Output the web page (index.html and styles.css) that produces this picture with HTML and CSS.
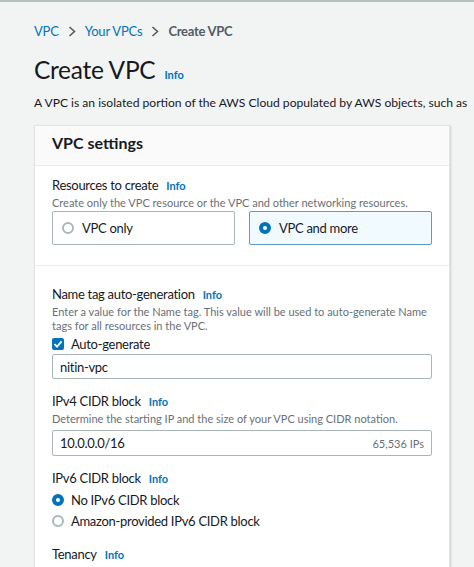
FILE: index.html
```html
<!DOCTYPE html>
<html lang="en">

<head>
    <meta charset="UTF-8">
    <meta name="viewport" content="width=device-width, initial-scale=1.0">
    <title>Create VPC</title>
    <link rel="stylesheet" href="styles.css">
</head>

<body>
    <div class="topbar"></div>

    <div class="page">
        <nav class="crumbs">
            <a href="#">VPC</a>
            <svg class="chevron" width="8" height="11" viewBox="0 0 8 11">
                <path d="M1.5 1 L6.5 5.5 L1.5 10" fill="none" stroke="#545b64" stroke-width="1.6" />
            </svg>
            <a href="#">Your VPCs</a>
            <svg class="chevron" width="8" height="11" viewBox="0 0 8 11">
                <path d="M1.5 1 L6.5 5.5 L1.5 10" fill="none" stroke="#545b64" stroke-width="1.6" />
            </svg>
            <span class="current">Create VPC</span>
        </nav>

        <h1 class="title">Create VPC <a class="info" href="#">Info</a></h1>
        <p class="lead">A VPC is an isolated portion of the AWS Cloud populated by AWS objects, such as</p>

        <div class="card">
            <div class="card-head">VPC settings</div>

            <div class="card-part">
                <div class="label">Resources to create <a class="info" href="#">Info</a></div>
                <div class="hint">Create only the VPC resource or the VPC and other networking resources.</div>
                <div class="tiles">
                    <label class="tile">
                        <span class="radio"></span>
                        VPC only
                    </label>
                    <label class="tile selected">
                        <span class="radio on"></span>
                        VPC and more
                    </label>
                </div>
            </div>

            <div class="card-part split">
                <div class="label">Name tag auto-generation <a class="info" href="#">Info</a></div>
                <div class="hint">Enter a value for the Name tag. This value will be used to auto-generate Name tags for all resources in the VPC.</div>
                <label class="check-row">
                    <span class="checkbox">
                        <svg width="10" height="10" viewBox="0 0 10 10">
                            <path d="M1.5 5.2 L4 7.6 L8.6 2.4" fill="none" stroke="#fff" stroke-width="1.8" />
                        </svg>
                    </span>
                    Auto-generate
                </label>
                <div class="input">nitin-vpc</div>

                <div class="label gap">IPv4 CIDR block <a class="info" href="#">Info</a></div>
                <div class="hint">Determine the starting IP and the size of your VPC using CIDR notation.</div>
                <div class="input cidr-input">
                    <span>10.0.0.0/16</span>
                    <span class="ips">65,536 IPs</span>
                </div>

                <div class="label gap">IPv6 CIDR block <a class="info" href="#">Info</a></div>
                <div class="options">
                    <label class="option"><span class="radio on"></span>No IPv6 CIDR block</label>
                    <label class="option"><span class="radio"></span>Amazon-provided IPv6 CIDR block</label>
                </div>

                <div class="label tenancy">Tenancy <a class="info" href="#">Info</a></div>
            </div>
        </div>
    </div>
</body>

</html>
```

FILE: styles.css
```css
body {
    margin: 0;
    background: #f2f3f3;
    font-family: Lato, "Open Sans", sans-serif;
    color: #16191f;
    overflow: hidden;
}

a {
    text-decoration: none;
}

.topbar {
    height: 2px;
    background: #b7bec0;
}

.page {
    padding: 21px 0 0 34px;
}

/* breadcrumbs */
.crumbs {
    height: 16px;
    display: flex;
    align-items: center;
    gap: 9px;
    font-size: 13px;
    letter-spacing: -0.2px;
    white-space: nowrap;
}

.crumbs a {
    color: #0073bb;
}

.crumbs .current {
    color: #545b64;
    font-weight: bold;
    letter-spacing: -0.3px;
}

.title {
    height: 32px;
    margin: 15px 0 0;
    display: flex;
    align-items: baseline;
    font-size: 24.5px;
    line-height: 32px;
    font-weight: normal;
    letter-spacing: -0.3px;
}

.info {
    color: #0073bb;
    font-size: 11px;
    font-weight: bold;
    letter-spacing: 0;
    margin-left: 8px;
}

.title .info {
    margin-left: 9px;
}

.lead {
    height: 18px;
    margin: 8px 0 0;
    font-size: 12.1px;
    line-height: 18px;
    white-space: nowrap;
}

/* container */
.card {
    margin-top: 13px;
    width: 414px;
    background: #fff;
    border: 1px solid #e1e4e4;
    box-shadow: 1px 1px 2px rgba(0, 0, 0, .15);
}

.card-head {
    height: 32px;
    padding: 7px 17px 0;
    background: #fafafa;
    border-bottom: 1px solid #eaeded;
    font-size: 16px;
    line-height: 20px;
    font-weight: bold;
}

.card-part {
    padding: 10px 17px 20px;
}

.card-part.split {
    border-top: 1px solid #eaeded;
    padding-top: 19px;
}

.label {
    height: 18px;
    display: flex;
    align-items: baseline;
    font-size: 13px;
    line-height: 18px;
    letter-spacing: -0.3px;
}

.label.gap {
    margin-top: 13px;
}

.label.tenancy {
    margin-top: 14px;
}

.hint {
    margin-top: 2px;
    font-size: 11px;
    line-height: 14px;
    color: #687078;
}

/* resource tiles */
.tiles {
    display: grid;
    grid-template-columns: 1fr 1fr;
    gap: 14px;
    margin-top: 1px;
}

.tile {
    height: 32px;
    display: flex;
    align-items: center;
    gap: 8px;
    padding: 0 9px;
    border: 1px solid #aab7b8;
    border-radius: 2px;
    font-size: 13px;
    letter-spacing: -0.3px;
}

.tile.selected {
    background: #f1faff;
    border-color: #5f9cc5;
}

.radio {
    width: 8px;
    height: 8px;
    border: 2px solid #aab7b8;
    border-radius: 50%;
    background: #fff;
    flex: none;
}

.radio.on {
    width: 4px;
    height: 4px;
    border: 4px solid #0073bb;
}

.check-row {
    height: 18px;
    display: flex;
    align-items: center;
    gap: 7px;
    margin-top: 2px;
    font-size: 13px;
    line-height: 18px;
    letter-spacing: -0.3px;
}

.checkbox {
    width: 12px;
    height: 12px;
    border-radius: 2px;
    background: #0073bb;
    display: flex;
    align-items: center;
    justify-content: center;
}

.input {
    margin-top: 1px;
    height: 23px;
    padding: 0 7px;
    border: 1px solid #aab7b8;
    border-radius: 2px;
    display: flex;
    align-items: center;
    justify-content: space-between;
    font-size: 13px;
    letter-spacing: -0.3px;
}

.cidr-input {
    margin-top: 4px;
    height: 24px;
}

.ips {
    font-size: 11px;
    letter-spacing: 0;
    color: #687078;
}

.options {
    margin-top: 3px;
    display: flex;
    flex-direction: column;
    gap: 1px;
}

.option {
    height: 20px;
    display: flex;
    align-items: center;
    gap: 7px;
    font-size: 13px;
    letter-spacing: -0.3px;
}
```
